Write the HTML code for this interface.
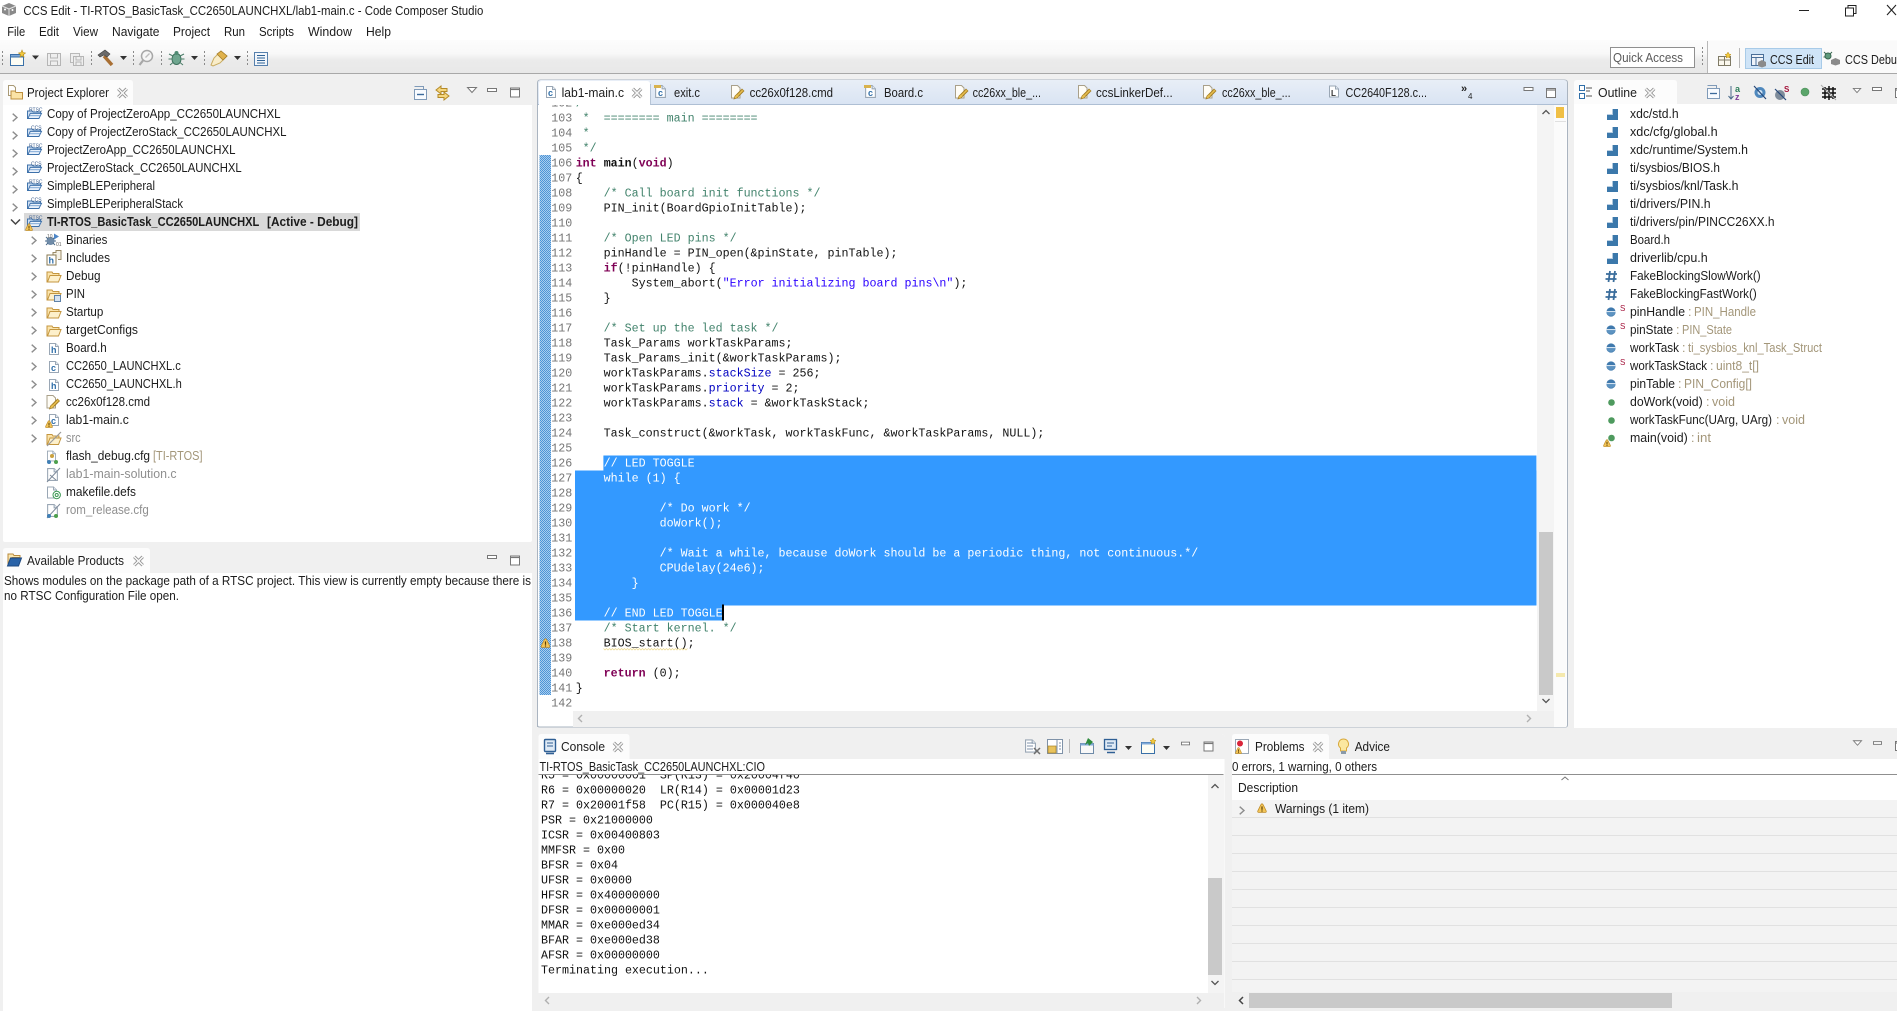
<!DOCTYPE html>
<html><head><meta charset="utf-8"><title>CCS Edit</title>
<style>
html,body{margin:0;padding:0;background:#f0f0f0;width:1897px;height:1011px;overflow:hidden}
svg{display:block;position:absolute;left:0;top:0;filter:blur(.3px)}
text{white-space:pre}
.s{font-family:"Liberation Sans",sans-serif;font-size:12.5px;fill:#1c1c1c}
.m{font-family:"Liberation Mono",monospace;font-size:11.67px;fill:#111}
.n{fill:#757575}.c{fill:#42836c}.k{fill:#7f0055;font-weight:bold}.t{fill:#2a00ff}.f{fill:#0000c0}
.w{fill:#fff}.g{fill:#8f8f8f}.y{fill:#a39679}
.b{font-weight:bold}
.h{font:bold 9px "Liberation Sans",sans-serif;fill:#2f6ea8}
</style></head><body>
<svg width="1897" height="1011" viewBox="0 0 1897 1011" xmlns="http://www.w3.org/2000/svg">
<defs>
<linearGradient id="tb" x1="0" y1="0" x2="0" y2="1"><stop offset="0" stop-color="#fcfcfc"/><stop offset=".42" stop-color="#f8f8f8"/><stop offset=".6" stop-color="#ebebeb"/><stop offset="1" stop-color="#e8e8e8"/></linearGradient>
<linearGradient id="et" x1="0" y1="0" x2="0" y2="1"><stop offset="0" stop-color="#e8eef7"/><stop offset="1" stop-color="#d9e4f3"/></linearGradient>
<pattern id="dith" width="2" height="2" patternUnits="userSpaceOnUse"><rect width="2" height="2" fill="#a9cdee"/><rect width="1" height="1" fill="#4d94d6"/><rect x="1" y="1" width="1" height="1" fill="#4d94d6"/></pattern>
<clipPath id="edclip"><rect x="539" y="105" width="999" height="606"/></clipPath>
<clipPath id="conclip"><rect x="539" y="775" width="668" height="218"/></clipPath>
<symbol id="x" viewBox="0 0 10 10" overflow="visible"><path d="M.8 .8L9.2 9.2M9.2 .8L.8 9.2" stroke="#8b8b8b" stroke-width="3.2" fill="none"/><path d="M.8 .8L9.2 9.2M9.2 .8L.8 9.2" stroke="#f6f6f6" stroke-width="1.6" fill="none"/></symbol>
<symbol id="ch" viewBox="0 0 6 9" overflow="visible"><path d="M.7.7L5 4.5.7 8.3" stroke="#8e8e8e" stroke-width="1.4" fill="none"/></symbol>
<symbol id="warn" viewBox="0 0 10 10" overflow="visible"><path d="M5 .8Q5.800 .8 6.300 2L9.200 8Q9.600 9.300 8.500 9.400H1.500Q.4 9.300 .8 8L3.700 2Q4.200 .8 5 .8z" fill="#f3c558" stroke="#bd8a26" stroke-width=".8"/><rect x="4.400" y="3.400" width="1.200" height="3.400" fill="#5a3d00"/><rect x="4.400" y="7.400" width="1.200" height="1.200" fill="#5a3d00"/></symbol>
<symbol id="pf" viewBox="0 0 16 9" overflow="visible"><path d="M.5 .5h5l1 1h8v1.500H4L1.500 8.500H.5z" fill="#cfe0f4" stroke="#3c70aa"/><path d="M3.500 3h12l-2.800 5.500H1z" fill="#e9f1fb" stroke="#3c70aa"/><path d="M3 5.500h11" stroke="#7ba5d4"/></symbol>
<symbol id="fo" viewBox="0 0 15 11" overflow="visible"><path d="M.5 .5h5l1 1.500h6v2H4L1.500 10.500H.5z" fill="#fbe4ab" stroke="#c4963f"/><path d="M3.500 4h11L12 10.500H1z" fill="#fdf0cb" stroke="#c4963f"/></symbol>
<symbol id="pg" viewBox="0 0 10 12" overflow="visible"><path d="M.5 .5h6l3 3v8H.5z" fill="#fff" stroke="#9aa7b5"/><path d="M6.500 .5v3h3" fill="#e6ecf3" stroke="#9aa7b5"/></symbol>
<symbol id="pen" viewBox="0 0 14 14" overflow="visible"><path d="M.5 .5h6l2.500 2.500v10H.5z" fill="#fffdf6" stroke="#a9a08a"/><path d="M4 11l7-7 2 2-7 7-3 1z" fill="#e8bf50" stroke="#a37d22" stroke-width=".7"/><path d="M6 9.500l4.500-4.500M7.500 11l4.500-4.500" stroke="#a37d22" stroke-width=".6"/></symbol>
<symbol id="inc" viewBox="0 0 11 11" overflow="visible"><rect x="5.500" y="0" width="5.500" height="11" fill="#3b78ab"/><rect x="0" y="6" width="11" height="5" fill="#3b78ab"/><rect x="4.800" y="0" width=".8" height="6" fill="#fff"/><rect x="0" y="5.300" width="5" height=".7" fill="#9cbcd8"/></symbol>
<symbol id="ball" viewBox="0 0 10 10" overflow="visible"><circle cx="5" cy="5" r="4.600" fill="#3f79ad"/><path d="M.3 4h9.400v1.200H.3z" fill="#d5e4f1"/><path d="M.5 5.200h9a4.600 4.600 0 0 1-9 0z" fill="#5d93c1"/></symbol>
<symbol id="min" viewBox="0 0 10 4" overflow="visible"><rect x=".5" y=".5" width="9" height="3" fill="#fff" stroke="#777"/></symbol>
<symbol id="max" viewBox="0 0 10 10" overflow="visible"><rect x=".5" y=".5" width="9" height="9" fill="#fff" stroke="#777"/><path d="M.5 2h9" stroke="#777" stroke-width="1.200"/></symbol>
<symbol id="vm" viewBox="0 0 10 6" overflow="visible"><path d="M.5 .5h9L5 5.500z" fill="#fff" stroke="#777"/></symbol>
</defs>

<rect width="1897" height="1011" fill="#f0f0f0"/>
<!-- title + menu -->
<rect width="1897" height="40" fill="#fff"/>
<path d="M9 3l7 3v7l-7 3-7-3V6z" fill="#8a8a8a"/><path d="M9 9L2 6M9 9l7-3M9 9v7" stroke="#e4e4e4" stroke-width="1"/><circle cx="5" cy="9.500" r="1" fill="#fff"/><circle cx="12.500" cy="10" r="1" fill="#fff"/>
<text class="s" x="23.400" y="15" textLength="460" lengthAdjust="spacingAndGlyphs">CCS Edit - TI-RTOS_BasicTask_CC2650LAUNCHXL/lab1-main.c - Code Composer Studio</text>
<path d="M1799 10.500h10" stroke="#222"/><path d="M1845.500 8h8v8h-8zM1848 8V5.500h8v8h-2.500" fill="none" stroke="#222" stroke-width="1"/><path d="M1887 5l9 10M1896 5l-9 10" stroke="#222" stroke-width="1.100"/>
<text class="s" x="7.200" y="36" textLength="18" lengthAdjust="spacingAndGlyphs">File</text>
<text class="s" x="39" y="36" textLength="20" lengthAdjust="spacingAndGlyphs">Edit</text>
<text class="s" x="73" y="36" textLength="25" lengthAdjust="spacingAndGlyphs">View</text>
<text class="s" x="112" y="36" textLength="47.500" lengthAdjust="spacingAndGlyphs">Navigate</text>
<text class="s" x="173" y="36" textLength="37" lengthAdjust="spacingAndGlyphs">Project</text>
<text class="s" x="224" y="36" textLength="21" lengthAdjust="spacingAndGlyphs">Run</text>
<text class="s" x="259" y="36" textLength="35" lengthAdjust="spacingAndGlyphs">Scripts</text>
<text class="s" x="308" y="36" textLength="44" lengthAdjust="spacingAndGlyphs">Window</text>
<text class="s" x="366" y="36" textLength="25" lengthAdjust="spacingAndGlyphs">Help</text>

<!-- toolbar -->
<rect y="40" width="1897" height="33" fill="url(#tb)"/>
<rect y="73" width="1897" height="1" fill="#a8a8a8"/>
<g stroke="#8a8a8a" stroke-dasharray="2 2" stroke-width="1">
<path d="M2.500 51v16M91.500 51v16M133.500 51v16M161.500 51v16M204.500 51v16M247.500 51v16M1702.500 47v20"/></g>
<!-- new -->
<path d="M10.500 54.500h13v11h-13z" fill="#fdfdf4" stroke="#3a70a8"/><path d="M10.500 54.500h13v2.500h-13z" fill="#7fa9d8" stroke="#3a70a8"/><path d="M22 50l1 2.500 2.500 .5-2 1.500 .5 2.500-2-1.200-2 1.200 .5-2.500-2-1.500 2.500-.5z" fill="#f2c93c" stroke="#b58a1a" stroke-width=".6"/>
<path d="M32 55.500h7l-3.500 4z" fill="#333"/>
<!-- save -->
<path d="M47.500 53.500h13v12h-13z" fill="#eee" stroke="#b5b5b5"/><path d="M50.500 54v4h7v-4M50.500 65v-4h7v4" fill="none" stroke="#b5b5b5"/>
<path d="M70.500 53.500h9v9h-9z" fill="#eee" stroke="#b9b9b9"/><path d="M73.500 56.500h10v9h-10z" fill="#eee" stroke="#b5b5b5"/><path d="M76 57v3h5v-3M76 65v-3h5v3" fill="none" stroke="#b5b5b5"/>
<!-- hammer -->
<path d="M104 56l8 9" stroke="#a86f33" stroke-width="3.500"/><path d="M98 55l7-5 5 4-3 3-3-2-4 2z" fill="#6a6a6a" stroke="#3e3e3e" stroke-width=".6"/>
<path d="M120 56h7l-3.500 4z" fill="#333"/>
<!-- search -->
<circle cx="147" cy="56" r="5.500" fill="#f5f5f5" stroke="#a7a7a7" stroke-width="1.500"/><path d="M143 60.500L139.500 65" stroke="#a7a7a7" stroke-width="2.200"/><path d="M149.500 53.500l-4 4" stroke="#bcbcbc" stroke-width="1.300"/>
<!-- bug -->
<ellipse cx="176.500" cy="59" rx="4.500" ry="5.500" fill="#6fa68f" stroke="#3d6f5b"/><path d="M169 54l4 2M184 54l-4 2M168.500 59h4M184.500 59h-4M170 65l3-2.500M183 65l-3-2.500" stroke="#4a7d68"/><circle cx="176.500" cy="53" r="2" fill="#4e8a72"/>
<path d="M191 56h7l-3.500 4z" fill="#333"/>
<!-- flash -->
<path d="M211 65l3-7 7-7 6 5-7 7-7 3z" fill="#f9edc9" stroke="#c9ac62"/><path d="M217 54l6 6 4-4-6-5z" fill="#e0b24c" stroke="#a67f2c" stroke-width=".8"/>
<path d="M234 56h7l-3.500 4z" fill="#333"/>
<rect x="254.500" y="52.500" width="13" height="13" fill="#f2f6fb" stroke="#5680ad"/><path d="M257 55.500h8M257 58h8M257 60.500h8M257 63h8" stroke="#2e6296"/>
<!-- right toolbar -->
<rect x="1610.500" y="47.500" width="84" height="20" fill="#fff" stroke="#8f8f8f"/>
<text class="s" x="1613" y="62" style="fill:#5a5a5a" textLength="70" lengthAdjust="spacingAndGlyphs">Quick Access</text>
<rect x="1707" y="41" width="190" height="32" fill="#fafafa"/><path d="M1707.500 41v32" stroke="#b8b8b8"/>
<rect x="1718.500" y="56.500" width="12" height="9" fill="#fbf8ee" stroke="#7f7a66"/><path d="M1718.500 60h12M1724.500 57v9" stroke="#7f7a66"/><path d="M1728 52l1 2 2 .5-1.500 1.500 .3 2-1.800-1-1.800 1 .3-2-1.500-1.500 2-.5z" fill="#f2c93c" stroke="#b58a1a" stroke-width=".5"/>
<path d="M1739.500 48v20" stroke="#b8b8b8"/>
<rect x="1745.500" y="48.500" width="76" height="20" fill="#cfe4f7" stroke="#a8cbe8"/>
<rect x="1751.500" y="54.500" width="12" height="11" fill="#eef3f9" stroke="#4a6f99"/><path d="M1751.500 57.500h12M1756 58v7" stroke="#4a6f99"/><path d="M1758 62l4-2 4 2v4l-4 1.500-4-1.500z" fill="#8b8b8b"/>
<text class="s" x="1770" y="64" textLength="44" lengthAdjust="spacingAndGlyphs">CCS Edit</text>
<circle cx="1828" cy="56" r="3" fill="#5f9a7c" stroke="#38664f"/><path d="M1824 52l2 2M1832 52l-2 2M1823.500 57h2" stroke="#38664f"/><path d="M1831 60l4.500-2 4.500 2v4l-4.500 1.500-4.500-1.500z" fill="#8b8b8b"/>
<text class="s" x="1845" y="64" textLength="58" lengthAdjust="spacingAndGlyphs">CCS Debug</text>

<!-- Project Explorer -->
<path d="M3 540V83q0-3 3-3h523q3 0 3 3v457q0 2-2 2H5q-2 0-2-2z" fill="#fff"/>
<path d="M3 105V83q0-3 3-3h523q3 0 3 3v22z" fill="#f0f0f0"/>
<path d="M3 105V83q0-3 3-3h124q3 0 3 3v22z" fill="#fcfcfc"/>
<path d="M8.500 85.500h5l2 2v8h-7z" fill="#fff" stroke="#a99a76"/><path d="M11 91h4l1 1.500h6.500v6.500H11z" fill="#fbe3a6" stroke="#bd8f3f"/>
<text class="s" x="27" y="97" textLength="82" lengthAdjust="spacingAndGlyphs">Project Explorer</text>
<use href="#x" x="117.500" y="88" width="10" height="10"/>
<rect x="414.500" y="89.500" width="12" height="10" fill="#f8fbff" stroke="#7f9ab8"/><path d="M414.500 86.500h9v3" fill="none" stroke="#7f9ab8"/><path d="M417 94.500h7" stroke="#3c6a9b" stroke-width="1.400"/>
<path d="M436 90l5-4v2.500h6v3h-6V94zM449 96l-5-4v2.500h-6v3h6V100z" fill="#f6d77e" stroke="#b48a28"/>
<use href="#vm" x="467" y="87" width="10" height="6"/>
<use href="#min" x="487" y="88" width="10" height="4"/>
<use href="#max" x="510" y="87.500" width="10" height="10"/>

<g><!-- tree rows -->
<rect x="24" y="213" width="336" height="18" fill="#d9d9d9"/>
<use href="#ch" x="12" y="113" width="6" height="9"/><use href="#ch" x="12" y="131" width="6" height="9"/><use href="#ch" x="12" y="149" width="6" height="9"/><use href="#ch" x="12" y="167" width="6" height="9"/><use href="#ch" x="12" y="185" width="6" height="9"/><use href="#ch" x="12" y="203" width="6" height="9"/>
<path d="M11 219.500l4.500 4.500 4.500-4.500" stroke="#444" stroke-width="1.500" fill="none"/>
<use href="#pf" x="27" y="110.500" width="15" height="8.500"/><use href="#pf" x="27" y="128.500" width="15" height="8.500"/><use href="#pf" x="27" y="146.500" width="15" height="8.500"/><use href="#pf" x="27" y="164.500" width="15" height="8.500"/><use href="#pf" x="27" y="182.500" width="15" height="8.500"/><use href="#pf" x="27" y="200.500" width="15" height="8.500"/><use href="#pf" x="27" y="218.500" width="15" height="8.500"/>
<g style="font:5px 'Liberation Sans',sans-serif;fill:#36598a">
<text x="29" y="111.500">RTSC</text><text x="31" y="129.500">CCS</text><text x="29" y="147.500">RTSC</text><text x="31" y="165.500">CCS</text><text x="29" y="183.500">RTSC</text><text x="31" y="201.500">CCS</text><text x="29" y="219.500">RTSC</text></g>
<use href="#warn" x="25" y="223" width="8" height="8"/>
<text class="s" x="47" y="118" textLength="233.600" lengthAdjust="spacingAndGlyphs">Copy of ProjectZeroApp_CC2650LAUNCHXL</text>
<text class="s" x="47" y="136" textLength="239.500" lengthAdjust="spacingAndGlyphs">Copy of ProjectZeroStack_CC2650LAUNCHXL</text>
<text class="s" x="47" y="154" textLength="188.500" lengthAdjust="spacingAndGlyphs">ProjectZeroApp_CC2650LAUNCHXL</text>
<text class="s" x="47" y="172" textLength="194.700" lengthAdjust="spacingAndGlyphs">ProjectZeroStack_CC2650LAUNCHXL</text>
<text class="s" x="47" y="190" textLength="108" lengthAdjust="spacingAndGlyphs">SimpleBLEPeripheral</text>
<text class="s" x="47" y="208" textLength="136" lengthAdjust="spacingAndGlyphs">SimpleBLEPeripheralStack</text>
<text class="s b" x="47" y="226" textLength="212.300" lengthAdjust="spacingAndGlyphs">TI-RTOS_BasicTask_CC2650LAUNCHXL</text>
<text class="s b" x="267" y="226" textLength="91" lengthAdjust="spacingAndGlyphs">[Active - Debug]</text>

<!-- level 2 chevrons -->
<use href="#ch" x="31" y="236" width="6" height="9"/><use href="#ch" x="31" y="254" width="6" height="9"/><use href="#ch" x="31" y="272" width="6" height="9"/><use href="#ch" x="31" y="290" width="6" height="9"/><use href="#ch" x="31" y="308" width="6" height="9"/><use href="#ch" x="31" y="326" width="6" height="9"/><use href="#ch" x="31" y="344" width="6" height="9"/><use href="#ch" x="31" y="362" width="6" height="9"/><use href="#ch" x="31" y="380" width="6" height="9"/><use href="#ch" x="31" y="398" width="6" height="9"/><use href="#ch" x="31" y="416" width="6" height="9"/><use href="#ch" x="31" y="434" width="6" height="9"/>

<!-- level 2 icons -->
<circle cx="50.500" cy="241" r="4" fill="#6f8ba8"/><path d="M46 237l2 2M55 237l-2 2M46 245l2-2M55 245l-2-2M45 241h2M54 241h2" stroke="#4a6a8a"/><path d="M54 233.500l5 3-5 3z" fill="#4d86c7"/><text x="47" y="238" style="font:5px 'Liberation Sans',sans-serif;fill:#666">10</text><text x="56" y="246" style="font:5px 'Liberation Sans',sans-serif;fill:#666">01</text>
<path d="M53 254.500v-2h3v-2h5v9h-3" fill="#f5f1e6" stroke="#9a8a66"/><rect x="47" y="255" width="9" height="10" fill="#fff" stroke="#8a7a50"/>
<text class="h" x="48.500" y="263.500">h</text>
<use href="#fo" x="46.500" y="271.500" width="15" height="11"/>
<use href="#fo" x="46.500" y="289.500" width="15" height="11"/><rect x="54.500" y="295.500" width="6" height="6" fill="#d5e3f2" stroke="#5f82a8"/>
<use href="#fo" x="46.500" y="307.500" width="15" height="11"/>
<use href="#fo" x="46.500" y="325.500" width="15" height="11"/>
<use href="#pg" x="49" y="343" width="10" height="12"/><text class="h" x="51" y="353">h</text>
<use href="#pg" x="49" y="361" width="10" height="12"/><text class="h" x="51" y="371">c</text>
<use href="#pg" x="49" y="379" width="10" height="12"/><text class="h" x="51" y="389">h</text>
<use href="#pen" x="46.500" y="395" width="14" height="14"/>
<use href="#pg" x="49" y="414" width="10" height="12"/><text class="h" x="51" y="424">c</text><use href="#warn" x="45" y="420" width="8" height="8"/>
<use href="#fo" x="46.500" y="434" width="15" height="11"/><path d="M47 446l14-14" stroke="#9a9a9a" stroke-width="1.200"/>
<use href="#pg" x="47" y="450" width="9" height="12"/><circle cx="52" cy="456" r="2" fill="#c9a13f"/><circle cx="49" cy="462" r="2" fill="#3f7fb5"/><circle cx="56" cy="462" r="2" fill="#4da04d"/>
<use href="#pg" x="47" y="468" width="11" height="13"/><path d="M47 482L60 468M50 475l6 5" stroke="#7d8a9a"/>
<use href="#pg" x="47" y="486" width="10" height="13"/><circle cx="56.700" cy="495" r="3.700" fill="#fff" stroke="#3d9a55"/><circle cx="56.700" cy="495" r="1.500" fill="none" stroke="#3d9a55"/>
<use href="#pg" x="47" y="504" width="11" height="13"/><path d="M47 518L60 504" stroke="#7d8a9a"/><circle cx="49" cy="516" r="2" fill="#3f7fb5"/><circle cx="56" cy="516" r="2" fill="#4da04d"/>

<text class="s" x="66" y="244" textLength="41.400" lengthAdjust="spacingAndGlyphs">Binaries</text>
<text class="s" x="66" y="262" textLength="44" lengthAdjust="spacingAndGlyphs">Includes</text>
<text class="s" x="66" y="280" textLength="34.500" lengthAdjust="spacingAndGlyphs">Debug</text>
<text class="s" x="66" y="298" textLength="19" lengthAdjust="spacingAndGlyphs">PIN</text>
<text class="s" x="66" y="316" textLength="37.300" lengthAdjust="spacingAndGlyphs">Startup</text>
<text class="s" x="66" y="334" textLength="72" lengthAdjust="spacingAndGlyphs">targetConfigs</text>
<text class="s" x="66" y="352" textLength="40.700" lengthAdjust="spacingAndGlyphs">Board.h</text>
<text class="s" x="66" y="370" textLength="114.800" lengthAdjust="spacingAndGlyphs">CC2650_LAUNCHXL.c</text>
<text class="s" x="66" y="388" textLength="115.800" lengthAdjust="spacingAndGlyphs">CC2650_LAUNCHXL.h</text>
<text class="s" x="66" y="406" textLength="84" lengthAdjust="spacingAndGlyphs">cc26x0f128.cmd</text>
<text class="s" x="66" y="424" textLength="62.800" lengthAdjust="spacingAndGlyphs">lab1-main.c</text>
<text class="s g" x="66" y="442" textLength="14.600" lengthAdjust="spacingAndGlyphs">src</text>
<text class="s" x="66" y="460" textLength="84" lengthAdjust="spacingAndGlyphs">flash_debug.cfg</text>
<text class="s y" x="153" y="460" textLength="49.500" lengthAdjust="spacingAndGlyphs">[TI-RTOS]</text>
<text class="s g" x="66" y="478" textLength="110.600" lengthAdjust="spacingAndGlyphs">lab1-main-solution.c</text>
<text class="s" x="66" y="496" textLength="70" lengthAdjust="spacingAndGlyphs">makefile.defs</text>
<text class="s g" x="66" y="514" textLength="82.800" lengthAdjust="spacingAndGlyphs">rom_release.cfg</text>
</g>

<!-- Available Products -->
<path d="M3 1011V551q0-3 3-3h523q3 0 3 3v460z" fill="#fff"/>
<path d="M3 573V551q0-3 3-3h523q3 0 3 3v22z" fill="#f0f0f0"/>
<path d="M3 573V551q0-3 3-3h141q3 0 3 3v22z" fill="#fcfcfc"/>
<path d="M8 554h5l1 1.500h6v2H12L9 566H8z" fill="#fbe7ae" stroke="#b88a3d"/><path d="M10.500 558h11l-3 8H7.500z" fill="#2a63a8" stroke="#1f4a80"/>
<text class="s" x="27" y="565" textLength="97" lengthAdjust="spacingAndGlyphs">Available Products</text>
<use href="#x" x="133.500" y="556" width="10" height="10"/>
<use href="#min" x="487" y="555" width="10" height="4"/>
<use href="#max" x="510" y="555.500" width="10" height="10"/>
<text class="s" x="4" y="585" textLength="527" lengthAdjust="spacingAndGlyphs">Shows modules on the package path of a RTSC project. This view is currently empty because there is</text>
<text class="s" x="4" y="600" textLength="175" lengthAdjust="spacingAndGlyphs">no RTSC Configuration File open.</text>

<!-- Editor -->
<path d="M537.500 727V83q0-3 3-3h1024q3 0 3 3v642q0 2-2 2H539.500q-2 0-2-2z" fill="#fff" stroke="#aab4c0"/>
<path d="M538 104.500V83q0-3 3-3h1023q3 0 3 3v21.500z" fill="url(#et)"/>
<path d="M538 104.500h1029" stroke="#aebfd4"/>
<path d="M539 105V84q0-3 3-3h105q3 0 3 3v21z" fill="#fff"/><path d="M650.500 84v20.500" stroke="#b7c5d6"/>
<use href="#pg" x="546" y="86" width="10" height="12"/><text class="h" x="548" y="96">c</text>
<text class="s" x="561.600" y="97" textLength="62.400" lengthAdjust="spacingAndGlyphs">lab1-main.c</text>
<use href="#x" x="632" y="88" width="10" height="10"/>
<use href="#pg" x="655" y="85" width="11" height="13"/><path d="M654 85h7v3h-7z" fill="#d9b24c"/><text class="h" x="658" y="96">c</text>
<text class="s" x="674" y="97" textLength="26" lengthAdjust="spacingAndGlyphs">exit.c</text>
<use href="#pen" x="731" y="85" width="14" height="14"/>
<text class="s" x="749.600" y="97" textLength="83.400" lengthAdjust="spacingAndGlyphs">cc26x0f128.cmd</text>
<use href="#pg" x="865" y="85" width="11" height="13"/><path d="M864 85h7v3h-7z" fill="#d9b24c"/><text class="h" x="868" y="96">c</text>
<text class="s" x="884" y="97" textLength="39" lengthAdjust="spacingAndGlyphs">Board.c</text>
<use href="#pen" x="955" y="85" width="14" height="14"/>
<text class="s" x="972.600" y="97" textLength="68.400" lengthAdjust="spacingAndGlyphs">cc26xx_ble_...</text>
<use href="#pen" x="1078" y="85" width="14" height="14"/>
<text class="s" x="1096" y="97" textLength="76.700" lengthAdjust="spacingAndGlyphs">ccsLinkerDef...</text>
<use href="#pen" x="1203" y="85" width="14" height="14"/>
<text class="s" x="1222" y="97" textLength="68.600" lengthAdjust="spacingAndGlyphs">cc26xx_ble_...</text>
<use href="#pg" x="1329" y="85" width="10" height="13"/><text x="1331" y="96" style="font:bold 8px 'Liberation Sans',sans-serif;fill:#333">L</text>
<text class="s" x="1345.500" y="97" textLength="81.500" lengthAdjust="spacingAndGlyphs">CC2640F128.c...</text>
<text x="1461" y="92" style="font:bold 11px 'Liberation Sans',sans-serif;fill:#222">»</text><text x="1468" y="99" style="font:8px 'Liberation Sans',sans-serif;fill:#222">4</text>
<use href="#min" x="1523.500" y="87" width="10" height="4"/>
<use href="#max" x="1546" y="88" width="10" height="10"/>

<!-- Gutter / code -->
<rect x="539.500" y="155" width="11.500" height="540" fill="url(#dith)"/>
<rect x="603.400" y="455.500" width="933" height="15" fill="#3399ff"/>
<rect x="575" y="470.500" width="961.500" height="135" fill="#3399ff"/>
<rect x="575" y="605.500" width="147" height="15" fill="#3399ff"/>
<rect x="722" y="604.500" width="2" height="16" fill="#000"/>
<g clip-path="url(#edclip)">
<g transform="translate(0 -.4)">
<text class="m n" x="551.300" y="107">102</text><text class="m c" x="575.700" y="107">/</text>
<text class="m n" x="551.300" y="122">103</text><text class="m c" x="575.700" y="122"> *  ======== main ========</text>
<text class="m n" x="551.300" y="137">104</text><text class="m c" x="575.700" y="137"> *</text>
<text class="m n" x="551.300" y="152">105</text><text class="m c" x="575.700" y="152"> */</text>
<text class="m n" x="551.300" y="167">106</text><text class="m" x="575.700" y="167"><tspan class="k">int</tspan> <tspan style="font-weight:bold">main</tspan>(<tspan class="k">void</tspan>)</text>
<text class="m n" x="551.300" y="182">107</text><text class="m" x="575.700" y="182">{</text>
<text class="m n" x="551.300" y="197">108</text><text class="m c" x="575.700" y="197">    /* Call board init functions */</text>
<text class="m n" x="551.300" y="212">109</text><text class="m" x="575.700" y="212">    PIN_init(BoardGpioInitTable);</text>
<text class="m n" x="551.300" y="227">110</text>
<text class="m n" x="551.300" y="242">111</text><text class="m c" x="575.700" y="242">    /* Open LED pins */</text>
<text class="m n" x="551.300" y="257">112</text><text class="m" x="575.700" y="257">    pinHandle = PIN_open(&amp;pinState, pinTable);</text>
<text class="m n" x="551.300" y="272">113</text><text class="m" x="575.700" y="272">    <tspan class="k">if</tspan>(!pinHandle) {</text>
<text class="m n" x="551.300" y="287">114</text><text class="m" x="575.700" y="287">        System_abort(<tspan class="t">"Error initializing board pins\n"</tspan>);</text>
<text class="m n" x="551.300" y="302">115</text><text class="m" x="575.700" y="302">    }</text>
<text class="m n" x="551.300" y="317">116</text>
<text class="m n" x="551.300" y="332">117</text><text class="m c" x="575.700" y="332">    /* Set up the led task */</text>
<text class="m n" x="551.300" y="347">118</text><text class="m" x="575.700" y="347">    Task_Params workTaskParams;</text>
<text class="m n" x="551.300" y="362">119</text><text class="m" x="575.700" y="362">    Task_Params_init(&amp;workTaskParams);</text>
<text class="m n" x="551.300" y="377">120</text><text class="m" x="575.700" y="377">    workTaskParams.<tspan class="f">stackSize</tspan> = 256;</text>
<text class="m n" x="551.300" y="392">121</text><text class="m" x="575.700" y="392">    workTaskParams.<tspan class="f">priority</tspan> = 2;</text>
<text class="m n" x="551.300" y="407">122</text><text class="m" x="575.700" y="407">    workTaskParams.<tspan class="f">stack</tspan> = &amp;workTaskStack;</text>
<text class="m n" x="551.300" y="422">123</text>
<text class="m n" x="551.300" y="437">124</text><text class="m" x="575.700" y="437">    Task_construct(&amp;workTask, workTaskFunc, &amp;workTaskParams, NULL);</text>
<text class="m n" x="551.300" y="452">125</text>
<text class="m n" x="551.300" y="467">126</text><text class="m w" x="575.700" y="467">    // LED TOGGLE</text>
<text class="m n" x="551.300" y="482">127</text><text class="m w" x="575.700" y="482">    while (1) {</text>
<text class="m n" x="551.300" y="497">128</text>
<text class="m n" x="551.300" y="512">129</text><text class="m w" x="575.700" y="512">            /* Do work */</text>
<text class="m n" x="551.300" y="527">130</text><text class="m w" x="575.700" y="527">            doWork();</text>
<text class="m n" x="551.300" y="542">131</text>
<text class="m n" x="551.300" y="557">132</text><text class="m w" x="575.700" y="557">            /* Wait a while, because doWork should be a periodic thing, not continuous.*/</text>
<text class="m n" x="551.300" y="572">133</text><text class="m w" x="575.700" y="572">            CPUdelay(24e6);</text>
<text class="m n" x="551.300" y="587">134</text><text class="m w" x="575.700" y="587">        }</text>
<text class="m n" x="551.300" y="602">135</text>
<text class="m n" x="551.300" y="617">136</text><text class="m w" x="575.700" y="617">    // END LED TOGGLE</text>
<text class="m n" x="551.300" y="632">137</text><text class="m c" x="575.700" y="632">    /* Start kernel. */</text>
<text class="m n" x="551.300" y="647">138</text><text class="m" x="575.700" y="647">    BIOS_start();</text>
<text class="m n" x="551.300" y="662">139</text>
<text class="m n" x="551.300" y="677">140</text><text class="m" x="575.700" y="677">    <tspan class="k">return</tspan> (0);</text>
<text class="m n" x="551.300" y="692">141</text><text class="m" x="575.700" y="692">}</text>
<text class="m n" x="551.300" y="707">142</text>
</g></g>
<path d="M603.500 648.500l1.500 1.500 1.500-1.500 1.500 1.500 1.500-1.500 1.500 1.500 1.500-1.500 1.500 1.500 1.500-1.500 1.500 1.500 1.500-1.500 1.500 1.500 1.500-1.500 1.500 1.500 1.500-1.500 1.500 1.500 1.500-1.500 1.500 1.500 1.500-1.500 1.500 1.500 1.500-1.500 1.500 1.500 1.500-1.500 1.500 1.500 1.500-1.500 1.500 1.500 1.500-1.500 1.500 1.500 1.500-1.500 1.500 1.500 1.500-1.500 1.500 1.500 1.500-1.500 1.500 1.500 1.500-1.500 1.500 1.500 1.500-1.500 1.500 1.500 1.500-1.500 1.500 1.500 1.500-1.500 1.500 1.500 1.500-1.500 1.500 1.500 1.500-1.500 1.500 1.500 1.500-1.500 1.500 1.500 1.500-1.500 1.500 1.500 1.500-1.500 1.500 1.500 1.500-1.500 1.500 1.500 1.500-1.500 1.500 1.500 1.500-1.500" fill="none" stroke="#ecd88a" stroke-width=".7"/>
<use href="#warn" x="540.500" y="638" width="10" height="10"/>
<!-- editor scrollbars -->
<rect x="1537" y="105" width="17" height="606" fill="#f4f4f4"/>
<path d="M1542.500 114l3.500-3.500 3.500 3.500" stroke="#555" stroke-width="1.300" fill="none"/>
<path d="M1542.500 699l3.500 3.500 3.500-3.500" stroke="#555" stroke-width="1.300" fill="none"/>
<rect x="1539" y="532" width="14" height="163" fill="#c9c9c9"/>
<rect x="1554" y="105" width="12.500" height="622" fill="#fbfbfb"/>
<rect x="1556" y="107" width="8" height="11" fill="#f0bf45"/><path d="M1555 121.500h11" stroke="#e0e0e0"/>
<rect x="1556" y="673" width="9" height="4" fill="#f5e9ae"/>
<rect x="573" y="711" width="981" height="16" fill="#f0f0f0"/>
<path d="M582 715l-3.500 3.500 3.500 3.500" stroke="#b0b0b0" stroke-width="1.400" fill="none"/>
<path d="M1527 715l3.500 3.500-3.500 3.500" stroke="#b0b0b0" stroke-width="1.400" fill="none"/>

<!-- Outline -->
<path d="M1574 728V83q0-3 3-3h320v648z" fill="#fff"/>
<path d="M1574 104V83q0-3 3-3h320v24z" fill="#f0f0f0"/>
<path d="M1574 104V83q0-3 3-3h97q3 0 3 3v21z" fill="#fcfcfc"/>
<rect x="1579.500" y="85.500" width="5" height="5" fill="#fff" stroke="#2f6ea8"/><rect x="1579.500" y="93.500" width="5" height="5" fill="#fff" stroke="#2f6ea8"/><path d="M1586 88h6M1586 91h4M1586 96h6" stroke="#555"/>
<text class="s" x="1598" y="97" textLength="39" lengthAdjust="spacingAndGlyphs">Outline</text>
<use href="#x" x="1645" y="88" width="10" height="10"/>
<rect x="1707.500" y="88.500" width="12" height="10" fill="#f8fbff" stroke="#7f9ab8"/><path d="M1707.500 85.500h9v3" fill="none" stroke="#7f9ab8"/><path d="M1710 93.500h7" stroke="#3c6a9b" stroke-width="1.300"/>
<path d="M1731 86v13M1728.500 96l2.500 3 2.500-3" stroke="#4a6a8a" fill="none"/><text x="1735" y="92" style="font:bold 9px 'Liberation Sans',sans-serif;fill:#2e7d5b">a</text><text x="1735" y="100" style="font:bold 9px 'Liberation Sans',sans-serif;fill:#7d3d9a">z</text>
<circle cx="1760" cy="92.500" r="5.500" fill="#4f88bd"/><circle cx="1760" cy="92.500" r="2.500" fill="#cfe2f2"/><path d="M1754 86l12 13" stroke="#26497a" stroke-width="1.200"/>
<circle cx="1780" cy="95" r="5" fill="#7f8c9a"/><path d="M1775 89l11 11" stroke="#26497a" stroke-width="1.200"/><text x="1784" y="92" style="font:bold 8px 'Liberation Sans',sans-serif;fill:#a3133a">S</text>
<circle cx="1805" cy="92" r="4" fill="#5aa56a" stroke="#4a8a58" stroke-width=".6"/>
<path d="M1825 87v12M1829 86v14M1833 87v12M1822 89h14M1822 93h14M1822 97h14" stroke="#111" stroke-width="1.500"/><path d="M1821 85l15 15" stroke="#aaa"/>
<use href="#vm" x="1852" y="88" width="10" height="5"/>
<use href="#min" x="1872" y="87" width="10" height="4"/>
<use href="#max" x="1895" y="88" width="10" height="10"/>

<g>
<use href="#inc" x="1607" y="109" width="11" height="11"/><use href="#inc" x="1607" y="127" width="11" height="11"/><use href="#inc" x="1607" y="145" width="11" height="11"/><use href="#inc" x="1607" y="163" width="11" height="11"/><use href="#inc" x="1607" y="181" width="11" height="11"/><use href="#inc" x="1607" y="199" width="11" height="11"/><use href="#inc" x="1607" y="217" width="11" height="11"/><use href="#inc" x="1607" y="235" width="11" height="11"/><use href="#inc" x="1607" y="253" width="11" height="11"/>
<path d="M1610 271l-1.500 11M1615 271l-1.500 11M1606 274h11M1605.500 279h11M1610 289l-1.500 11M1615 289l-1.500 11M1606 292h11M1605.500 297h11" stroke="#3a6d9c" stroke-width="1.800" fill="none"/>
<use href="#ball" x="1606" y="307" width="10" height="10"/><use href="#ball" x="1606" y="325" width="10" height="10"/><use href="#ball" x="1606" y="343" width="10" height="10"/><use href="#ball" x="1606" y="361" width="10" height="10"/><use href="#ball" x="1606" y="379" width="10" height="10"/>
<g style="font:8px 'Liberation Sans',sans-serif;fill:#a3133a"><text x="1620" y="311">S</text><text x="1620" y="329">S</text><text x="1620" y="365">S</text></g>
<circle cx="1611.500" cy="402.500" r="3.300" fill="#4e9a5e"/><circle cx="1611.500" cy="420.500" r="3.300" fill="#4e9a5e"/><circle cx="1611.500" cy="438" r="3.300" fill="#4e9a5e"/><use href="#warn" x="1603" y="439" width="8" height="8"/>
<text class="s" x="1630" y="118" textLength="48.600" lengthAdjust="spacingAndGlyphs">xdc/std.h</text>
<text class="s" x="1630" y="136" textLength="87.700" lengthAdjust="spacingAndGlyphs">xdc/cfg/global.h</text>
<text class="s" x="1630" y="154" textLength="118" lengthAdjust="spacingAndGlyphs">xdc/runtime/System.h</text>
<text class="s" x="1630" y="172" textLength="90" lengthAdjust="spacingAndGlyphs">ti/sysbios/BIOS.h</text>
<text class="s" x="1630" y="190" textLength="108.500" lengthAdjust="spacingAndGlyphs">ti/sysbios/knl/Task.h</text>
<text class="s" x="1630" y="208" textLength="80.600" lengthAdjust="spacingAndGlyphs">ti/drivers/PIN.h</text>
<text class="s" x="1630" y="226" textLength="144.600" lengthAdjust="spacingAndGlyphs">ti/drivers/pin/PINCC26XX.h</text>
<text class="s" x="1630" y="244" textLength="40" lengthAdjust="spacingAndGlyphs">Board.h</text>
<text class="s" x="1630" y="262" textLength="77.700" lengthAdjust="spacingAndGlyphs">driverlib/cpu.h</text>
<text class="s" x="1630" y="280" textLength="130.700" lengthAdjust="spacingAndGlyphs">FakeBlockingSlowWork()</text>
<text class="s" x="1630" y="298" textLength="126.700" lengthAdjust="spacingAndGlyphs">FakeBlockingFastWork()</text>
<text class="s" x="1630" y="316" textLength="55" lengthAdjust="spacingAndGlyphs">pinHandle</text><text class="s y" x="1688" y="316">:</text><text class="s y" x="1694" y="316" textLength="62" lengthAdjust="spacingAndGlyphs">PIN_Handle</text>
<text class="s" x="1630" y="334" textLength="43" lengthAdjust="spacingAndGlyphs">pinState</text><text class="s y" x="1676" y="334">:</text><text class="s y" x="1682" y="334" textLength="50" lengthAdjust="spacingAndGlyphs">PIN_State</text>
<text class="s" x="1630" y="352" textLength="49" lengthAdjust="spacingAndGlyphs">workTask</text><text class="s y" x="1682" y="352">:</text><text class="s y" x="1688" y="352" textLength="134" lengthAdjust="spacingAndGlyphs">ti_sysbios_knl_Task_Struct</text>
<text class="s" x="1630" y="370" textLength="77" lengthAdjust="spacingAndGlyphs">workTaskStack</text><text class="s y" x="1710" y="370">:</text><text class="s y" x="1716" y="370" textLength="43" lengthAdjust="spacingAndGlyphs">uint8_t[]</text>
<text class="s" x="1630" y="388" textLength="45" lengthAdjust="spacingAndGlyphs">pinTable</text><text class="s y" x="1678" y="388">:</text><text class="s y" x="1684" y="388" textLength="68" lengthAdjust="spacingAndGlyphs">PIN_Config[]</text>
<text class="s" x="1630" y="406" textLength="72.700" lengthAdjust="spacingAndGlyphs">doWork(void)</text><text class="s y" x="1706" y="406">:</text><text class="s y" x="1712" y="406" textLength="23" lengthAdjust="spacingAndGlyphs">void</text>
<text class="s" x="1630" y="424" textLength="142" lengthAdjust="spacingAndGlyphs">workTaskFunc(UArg, UArg)</text><text class="s y" x="1776" y="424">:</text><text class="s y" x="1782" y="424" textLength="23" lengthAdjust="spacingAndGlyphs">void</text>
<text class="s" x="1630" y="442" textLength="57.700" lengthAdjust="spacingAndGlyphs">main(void)</text><text class="s y" x="1691" y="442">:</text><text class="s y" x="1697" y="442" textLength="14" lengthAdjust="spacingAndGlyphs">int</text>
</g>

<!-- Console -->
<path d="M538.500 1008V737q0-3 3-3h680q3 0 3 3v271z" fill="#fff"/>
<path d="M538.500 759V737q0-3 3-3h680q3 0 3 3v22z" fill="#f0f0f0"/>
<path d="M538.500 759V737q0-3 3-3h85q3 0 3 3v22z" fill="#fcfcfc"/>
<rect x="544.500" y="739.500" width="11" height="12" rx="1" fill="#dfeaf5" stroke="#2f5f94" stroke-width="1.400"/><path d="M547 743h6M547 746h6" stroke="#2f5f94"/><path d="M546 753.500h8" stroke="#2f5f94" stroke-width="1.600"/>
<text class="s" x="561" y="751" textLength="44" lengthAdjust="spacingAndGlyphs">Console</text>
<use href="#x" x="613" y="742" width="10" height="10"/>
<use href="#pg" x="1025" y="739" width="11" height="14"/><path d="M1027 743h6M1027 746h6M1027 749h6" stroke="#7f92a8"/><path d="M1034 748l6 6M1040 748l-6 6" stroke="#6e6e6e" stroke-width="1.500"/>
<rect x="1047.500" y="739.500" width="15" height="14" fill="#fff" stroke="#7f92a8"/><path d="M1057 740v13" stroke="#7f92a8"/><path d="M1059 743h2M1059 746h2M1059 749h2" stroke="#7f92a8"/><rect x="1048" y="746" width="8" height="7" fill="#e9c35c" stroke="#a8842a" stroke-width=".7"/>
<path d="M1069.500 739v14" stroke="#b8b8b8"/>
<rect x="1080.500" y="743.500" width="13" height="10" fill="#f8f8f8" stroke="#6e8aa8"/><path d="M1080.500 743.500h13v2h-13z" fill="#7fa9d8"/><path d="M1088 738l5 4-4 4-1-3-3 2z" fill="#2e8b3d"/>
<rect x="1104.500" y="739.500" width="12" height="10" fill="#dfeaf5" stroke="#2f5f94" stroke-width="1.300"/><path d="M1107 752.500h8" stroke="#2f5f94" stroke-width="1.500"/><path d="M1107 743h7M1107 746h5" stroke="#2f5f94"/>
<path d="M1125 746h7l-3.500 4z" fill="#333"/>
<rect x="1141.500" y="742.500" width="13" height="11" fill="#fdfdf4" stroke="#3a70a8"/><path d="M1141.500 742.500h13v2h-13z" fill="#7fa9d8"/><path d="M1153 738l1 2 2 .5-1.500 1.500 .3 2-1.800-1-1.800 1 .3-2-1.500-1.500 2-.5z" fill="#f2c93c" stroke="#b58a1a" stroke-width=".5"/>
<path d="M1163 746h7l-3.500 4z" fill="#333"/>
<use href="#min" x="1181" y="741.500" width="9" height="4"/>
<use href="#max" x="1203.500" y="741.500" width="10" height="10"/>
<text class="s" x="539.500" y="771" textLength="225.500" lengthAdjust="spacingAndGlyphs">TI-RTOS_BasicTask_CC2650LAUNCHXL:CIO</text>
<rect x="538.500" y="774" width="685" height="1" fill="#8f8f8f"/>
<g clip-path="url(#conclip)">
<g transform="translate(0 -.4)">
<text class="m" x="541" y="779">R5 = 0x00000001  SP(R13) = 0x20004f40</text>
<text class="m" x="541" y="794">R6 = 0x00000020  LR(R14) = 0x00001d23</text>
<text class="m" x="541" y="809">R7 = 0x20001f58  PC(R15) = 0x000040e8</text>
<text class="m" x="541" y="824">PSR = 0x21000000</text>
<text class="m" x="541" y="839">ICSR = 0x00400803</text>
<text class="m" x="541" y="854">MMFSR = 0x00</text>
<text class="m" x="541" y="869">BFSR = 0x04</text>
<text class="m" x="541" y="884">UFSR = 0x0000</text>
<text class="m" x="541" y="899">HFSR = 0x40000000</text>
<text class="m" x="541" y="914">DFSR = 0x00000001</text>
<text class="m" x="541" y="929">MMAR = 0xe000ed34</text>
<text class="m" x="541" y="944">BFAR = 0xe000ed38</text>
<text class="m" x="541" y="959">AFSR = 0x00000000</text>
<text class="m" x="541" y="974">Terminating execution...</text>
</g></g>
<rect x="1208" y="775" width="16" height="218" fill="#f4f4f4"/>
<rect x="1208" y="878" width="14" height="97" fill="#c9c9c9"/>
<path d="M1211.500 788l3.500-3.500 3.500 3.500" stroke="#555" stroke-width="1.300" fill="none"/>
<path d="M1211.500 981l3.500 3.500 3.500-3.500" stroke="#555" stroke-width="1.300" fill="none"/>
<rect x="538.500" y="993" width="685.500" height="15" fill="#f0f0f0"/>
<path d="M549 997l-3.500 3.500 3.500 3.500" stroke="#b0b0b0" stroke-width="1.400" fill="none"/>
<path d="M1197 997l3.500 3.500-3.500 3.500" stroke="#b0b0b0" stroke-width="1.400" fill="none"/>

<!-- Problems -->
<path d="M1232 1008V737q0-3 3-3h662v274z" fill="#fff"/>
<path d="M1232 759V737q0-3 3-3h662v25z" fill="#f0f0f0"/>
<path d="M1232 759V737q0-3 3-3h91q3 0 3 3v22z" fill="#fcfcfc"/>
<rect x="1235.500" y="739.500" width="13" height="14" fill="#fff" stroke="#9aa7b5"/><circle cx="1240" cy="743.500" r="3" fill="#d9263b"/><use href="#warn" x="1235" y="747" width="7" height="7"/>
<text class="s" x="1255" y="751" textLength="49.500" lengthAdjust="spacingAndGlyphs">Problems</text>
<use href="#x" x="1313" y="742" width="10" height="10"/>
<path d="M1343.500 739a5 5 0 0 1 3 9v3h-6v-3a5 5 0 0 1 3-9z" fill="#fbe7a0" stroke="#d8a83a"/><rect x="1341" y="751" width="5" height="3" fill="#8a9aa8"/>
<text class="s" x="1354.700" y="751" textLength="35.300" lengthAdjust="spacingAndGlyphs">Advice</text>
<use href="#vm" x="1853" y="740" width="9" height="6"/>
<use href="#min" x="1873" y="741" width="9" height="4"/>
<use href="#max" x="1895" y="741" width="10" height="10"/>
<text class="s" x="1232" y="771" textLength="145" lengthAdjust="spacingAndGlyphs">0 errors, 1 warning, 0 others</text>
<rect x="1232" y="774" width="665" height="1" fill="#8f8f8f"/>
<text class="s" x="1238" y="792" textLength="60" lengthAdjust="spacingAndGlyphs">Description</text>
<path d="M1561.500 780l3.500-3 3.500 3" stroke="#777" fill="none"/>
<rect x="1232" y="800" width="665" height="192" fill="#f3f3f3"/>
<path d="M1232 817.500h665M1232 835.500h665M1232 853.500h665M1232 871.500h665M1232 889.500h665M1232 907.500h665M1232 925.500h665M1232 943.500h665M1232 961.500h665M1232 979.500h665" stroke="#e1e1e1"/>
<use href="#ch" x="1239" y="806" width="6" height="9"/>
<use href="#warn" x="1257" y="802.500" width="10" height="11"/>
<text class="s" x="1275" y="813" textLength="94" lengthAdjust="spacingAndGlyphs">Warnings (1 item)</text>
<rect x="1232" y="992" width="665" height="16" fill="#f0f0f0"/>
<rect x="1249" y="993" width="423" height="15" fill="#c9c9c9"/>
<path d="M1243 997l-3.500 3.500 3.500 3.500" stroke="#444" stroke-width="1.500" fill="none"/>
</svg>
</body></html>
